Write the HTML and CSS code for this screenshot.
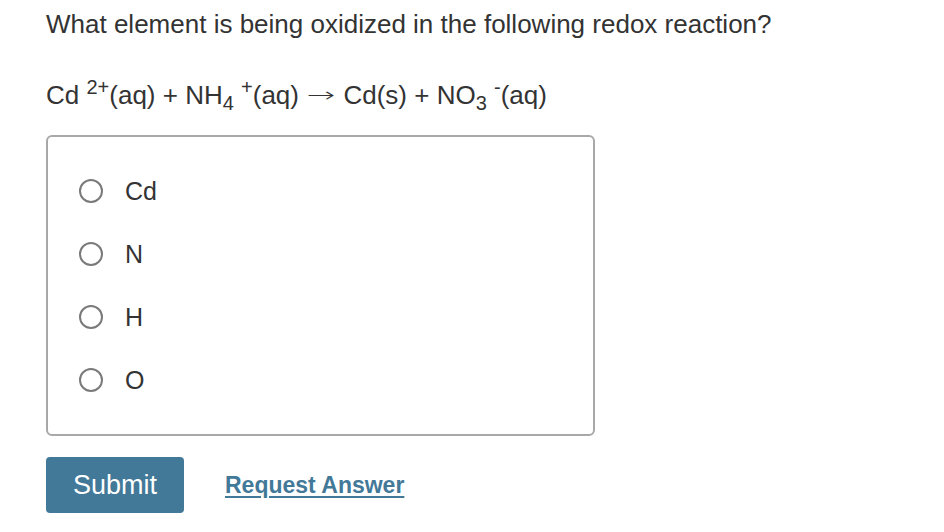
FILE: index.html
```html
<!DOCTYPE html>
<html>
<head>
<meta charset="utf-8">
<link rel="stylesheet" href="styles.css">
</head>
<body>
<div class="page">
  <p class="question">What element is being oxidized in the following redox reaction?</p>
  <p class="equation">Cd <sup>2+</sup>(aq) + NH<sub>4</sub> <sup>+</sup>(aq) <span class="arrow">→</span> Cd(s) + NO<sub>3</sub> <sup>-</sup>(aq)</p>
  <div class="choices">
    <label class="choice"><span class="radio"></span><span class="label">Cd</span></label>
    <label class="choice"><span class="radio"></span><span class="label">N</span></label>
    <label class="choice"><span class="radio"></span><span class="label">H</span></label>
    <label class="choice"><span class="radio"></span><span class="label">O</span></label>
  </div>
  <div class="actions">
    <button class="submit">Submit</button>
    <a class="request" href="#">Request Answer</a>
  </div>
</div>
</body>
</html>
```
FILE: styles.css
```css
html, body {
  margin: 0;
  padding: 0;
  background: #fff;
}
.page {
  padding: 8px 0 0 46px;
  font-family: "Liberation Sans", Arial, sans-serif;
  color: #333;
}
.question {
  margin: 0;
  font-size: 26px;
  line-height: 32px;
}
.equation {
  margin: 39px 0 0 0;
  font-size: 26px;
  line-height: 32px;
}
.equation sup, .equation sub {
  font-size: 20px;
  line-height: 0;
}
.arrow {
  display: inline-block;
  width: 30px;
  text-align: center;
  font-family: "DejaVu Sans", sans-serif;
  font-size: 20px;
  font-weight: 300;
  transform: translateY(-2px) scaleX(1.7);
}
.choices {
  margin-top: 22px;
  width: 549px;
  height: 301px;
  border: 2px solid #a8a8a8;
  border-radius: 6px;
  padding: 41px 0 0 31px;
  box-sizing: border-box;
  display: flex;
  flex-direction: column;
  gap: 37px;
}
.choice {
  display: flex;
  align-items: center;
  height: 26px;
  font-size: 25px;
}
.radio {
  width: 20px;
  height: 20px;
  border: 2px solid #7a7a7a;
  border-radius: 50%;
  margin-right: 22px;
}
.label {
  line-height: 26px;
}
.actions {
  margin-top: 21px;
  display: flex;
  align-items: center;
  gap: 41px;
}
.submit {
  width: 138px;
  height: 56px;
  background: #427898;
  color: #fff;
  border: none;
  border-radius: 4px;
  font-family: "Liberation Sans", Arial, sans-serif;
  font-size: 27px;
  padding: 0;
}
.request {
  color: #427898;
  font-weight: bold;
  font-size: 23px;
  text-decoration: underline;
  text-underline-offset: 3px;
}
```
